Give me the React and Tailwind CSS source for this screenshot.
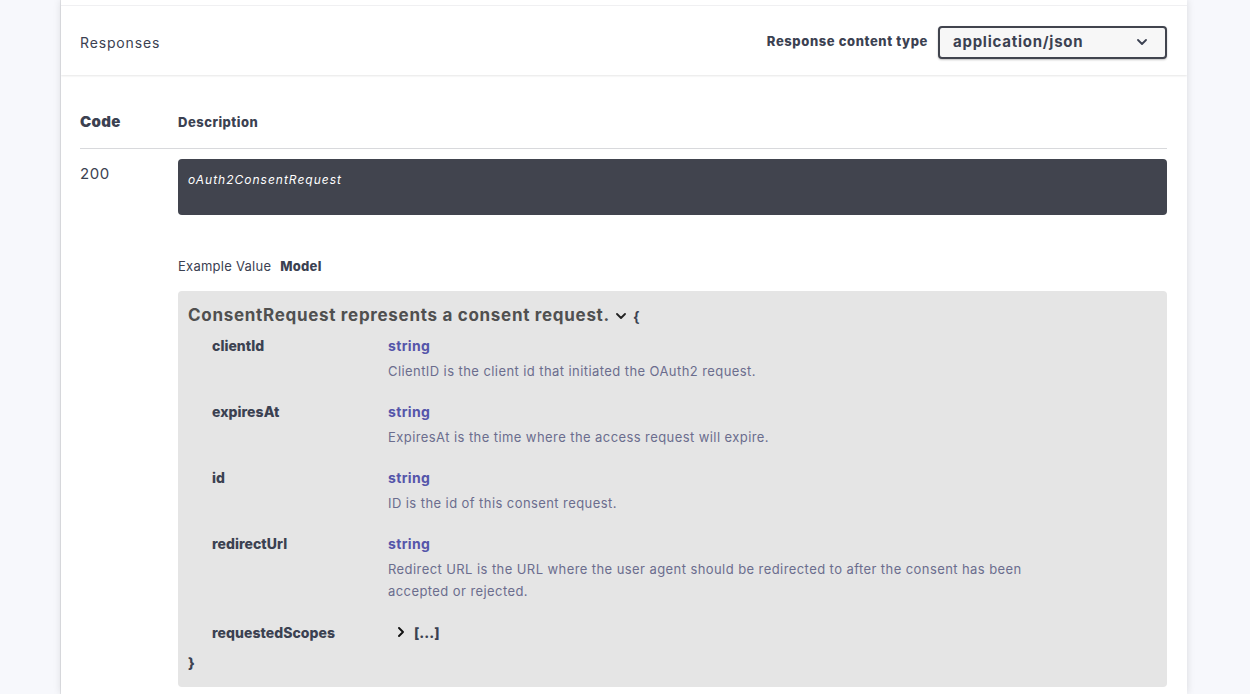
import React from "react";

const props = [
  { name: "clientId", desc: ["ClientID is the client id that initiated the OAuth2 request."] },
  { name: "expiresAt", desc: ["ExpiresAt is the time where the access request will expire."] },
  { name: "id", desc: ["ID is the id of this consent request."] },
  {
    name: "redirectUrl",
    desc: [
      "Redirect URL is the URL where the user agent should be redirected to after the consent has been",
      "accepted or rejected.",
    ],
  },
];

function ChevronDown({ className }) {
  return (
    <svg viewBox="0 0 10 6" className={className} fill="none" stroke="currentColor" strokeWidth="1.8" strokeLinecap="round" strokeLinejoin="round">
      <path d="M1 1l4 4 4-4" />
    </svg>
  );
}

function ChevronRight({ className }) {
  return (
    <svg viewBox="0 0 6 10" className={className} fill="none" stroke="currentColor" strokeWidth="1.9" strokeLinecap="round" strokeLinejoin="round">
      <path d="M1 1l4 4-4 4" />
    </svg>
  );
}

export default function App() {
  return (
    <div className="min-h-screen bg-[#f7f8fc] font-['Inter','Liberation_Sans',sans-serif] text-[#3b4151]">
      <div className="mx-[61px] w-[1126px] bg-white shadow-[-1px_0_0_rgba(0,0,0,0.08),0_0_8px_rgba(0,0,0,0.12)] h-[694px] overflow-hidden">
        <div className="h-[6px] border-b border-[#f1f1f3]" />
        <div className="h-[69px] flex items-center justify-between pt-[3px] pl-[19px] pr-[20px] shadow-[0_1px_2px_rgba(0,0,0,0.1)]">
          <div className="text-[14px] tracking-[0.85px]">Responses</div>
          <div className="flex items-center gap-[10px]">
            <span className="text-[13px] font-extrabold tracking-[0.6px]">Response content type</span>
            <div className="w-[229px] h-[33px] border-2 border-[#41444e] rounded-[4px] bg-[#f7f7f7] shadow-[0_1px_2px_rgba(0,0,0,0.25)] flex items-center justify-between pl-[13px] pr-[18px]">
              <span className="text-[15px] font-bold tracking-[0.75px]">application/json</span>
              <ChevronDown className="w-[10px] h-[6px] text-[#3b4151]" />
            </div>
          </div>
        </div>

        <div className="pt-[22px] pl-[19px] pr-[20px]">
          <div className="flex items-center h-[52px] border-b border-[#d8d9dc]">
            <div className="w-[98px] text-[15px] font-black tracking-[0.3px]">Code</div>
            <div className="text-[13px] font-extrabold tracking-[0.5px]">Description</div>
          </div>
          <div className="flex pt-[10px]">
            <div className="w-[98px] text-[15px] pt-[4px] tracking-[0.6px]">200</div>
            <div className="flex-1">
              <div className="h-[56px] bg-[#41444e] rounded-[4px] px-[10px] pt-[13px]">
                <div className="text-[12px] italic text-white tracking-[1px] leading-[16px]">oAuth2ConsentRequest</div>
              </div>
              <div className="mt-[43px] text-[13px] leading-[16px] flex gap-[9px] tracking-[0.25px]">
                <span>Example Value</span>
                <span className="font-extrabold">Model</span>
              </div>
              <div className="mt-[17px] bg-[#e5e5e5] rounded-[4px] pl-[10px] pt-[15px] pb-[14px] h-[396px]">
                <div className="flex items-center h-[20px] text-[17px] font-bold text-[#505050] tracking-[0.7px]">
                  <span>ConsentRequest represents a consent request.</span>
                  <ChevronDown className="w-[10px] h-[6px] ml-[6px] text-[#222]" />
                  <span className="ml-[7px] text-[14px] text-[#3b4151]">{"{"}</span>
                </div>
                <div className="mt-[10px] pl-[24px]">
                  {props.map((p) => (
                    <div key={p.name} className="flex mb-[20px]">
                      <div className="w-[176px] text-[14px] font-extrabold leading-[20px] tracking-[0.05px]">{p.name}</div>
                      <div>
                        <div className="text-[14px] font-bold text-[#55a] leading-[20px] tracking-[0.35px]">string</div>
                        <div className="mt-[4px] text-[13px] leading-[22px] text-[#6b6d8e] tracking-[0.42px] whitespace-nowrap">
                          {p.desc.map((d) => (
                            <div key={d}>{d}</div>
                          ))}
                        </div>
                      </div>
                    </div>
                  ))}
                  <div className="flex h-[20px] items-center">
                    <div className="w-[176px] text-[14px] font-extrabold tracking-[0.05px]">requestedScopes</div>
                    <div className="flex items-center pl-[10px] gap-[10px] text-[14px] font-extrabold">
                      <ChevronRight className="w-[6px] h-[10px] text-[#111]" />
                      <span>[...]</span>
                    </div>
                  </div>
                </div>
                <div className="mt-[11px] text-[14px] font-extrabold leading-[20px]">{"}"}</div>
              </div>
            </div>
          </div>
        </div>
      </div>
    </div>
  );
}
